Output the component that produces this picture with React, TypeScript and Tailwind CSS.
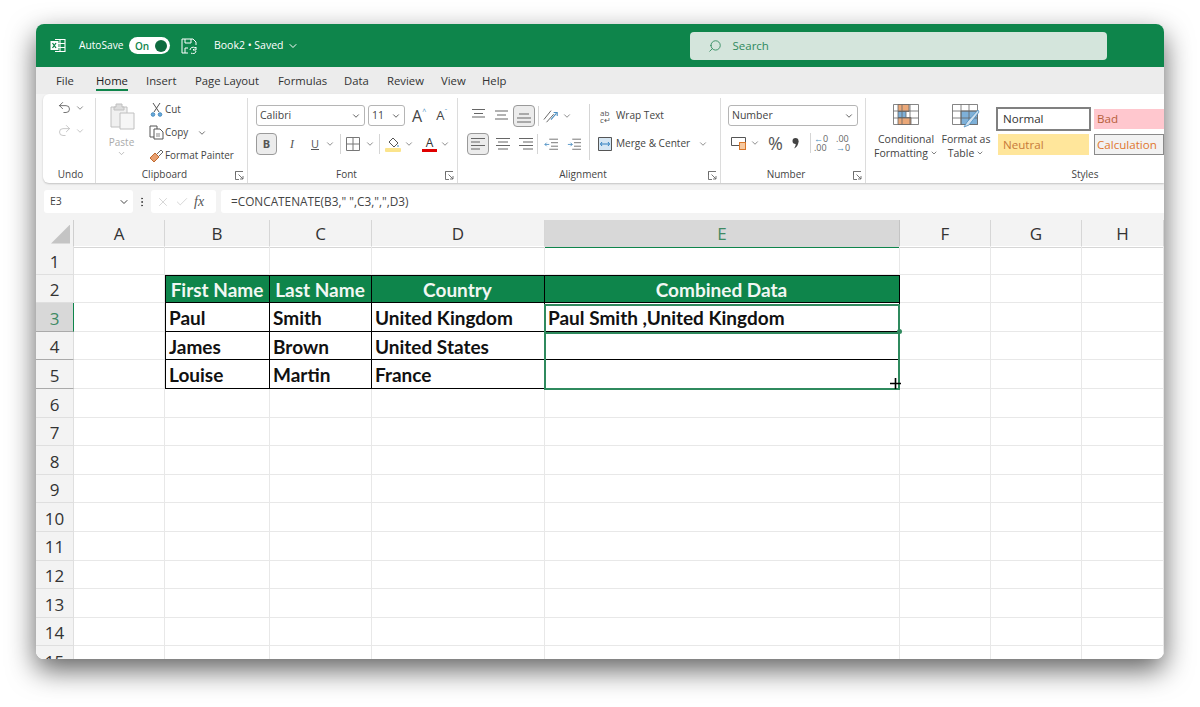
import React from "react";
import { ChevronDown, Search, Undo2, Redo2, MoreVertical, X, Check } from "lucide-react";

const UI = "font-['Open_Sans',sans-serif]";
const colWidths = "grid-cols-[38px_91px_105px_102px_173px_355px_91px_91px_82px]";

const Chev = ({ className = "" }: { className?: string }) => (
  <ChevronDown size={10} strokeWidth={1.6} className={"shrink-0 text-[#555] " + className} />
);

const Launcher = () => (
  <svg width="9" height="9" viewBox="0 0 9 9" className="absolute bottom-[3px] right-[3px]" fill="none" stroke="#666">
    <path d="M.5 4V.5H8M.5.5V8.5H4M3.5 3.5 8 8M8 5v3H5" strokeWidth="0.9" />
  </svg>
);

const Lines = ({ rows }: { rows: [number, number, number][] }) => (
  <svg width="16" height="14" viewBox="0 0 16 14" stroke="#666" strokeWidth="1.1">
    {rows.map(([y, a, b], i) => (
      <path key={i} d={`M${a} ${y}H${b}`} />
    ))}
  </svg>
);

const ExcelLogo = () => (
  <svg width="16" height="15" viewBox="0 0 16 15" fill="none" stroke="white" strokeWidth="1.1">
    <path d="M5 1.500h10v12H5M10 1.500v12M5 5.500h10M5 9.500h10" />
    <rect x="0.500" y="3" width="8" height="9" fill="white" stroke="none" />
    <path d="M2.500 5l3.500 5M6 5l-3.500 5" stroke="#0e854b" strokeWidth="1.3" />
  </svg>
);

function TitleBar() {
  return (
    <div className="flex h-[43px] items-center bg-[#0e854b] text-white">
      <div className="ml-[14px]">
        <ExcelLogo />
      </div>
      <span className="ml-[13px] w-[50px] text-[10.2px]">AutoSave</span>
      <div className="flex h-[17px] w-[41px] items-center justify-between rounded-full bg-white pl-[6px] pr-[3px]">
        <span className="text-[10px] font-semibold leading-none text-[#0e854b]">On</span>
        <span className="h-[12px] w-[12px] rounded-full bg-[#0e6b3f]" />
      </div>
      <svg width="16" height="16" viewBox="0 0 16 16" fill="none" stroke="white" strokeWidth="1" className="ml-[11px]">
        <path d="M1 1h11l3 3v3M1 1v14h6M4 1v4h6V1M4 15v-5h3" />
        <path d="M9 12a3 3 0 0 1 5-2l1-1v3h-3l1-1M15 13a3 3 0 0 1-5 2" />
      </svg>
      <span className="ml-[17px] text-[10.5px]">Book2 • Saved</span>
      <ChevronDown size={12} strokeWidth={2} className="ml-[3px]" />
      <div className="ml-[391px] flex h-[28px] w-[417px] items-center rounded-[4px] bg-[#d4e5dc] pl-[18px] text-[#2f8a5e]">
        <Search size={14} strokeWidth={1.5} className="-scale-x-100" />
        <span className="ml-[11px] text-[11.5px]">Search</span>
      </div>
    </div>
  );
}

function Tabs() {
  const tabs: [string, string][] = [
    ["File", "w-[40px]"],
    ["Home", "w-[50px]"],
    ["Insert", "w-[49px]"],
    ["Page Layout", "w-[83px]"],
    ["Formulas", "w-[66px]"],
    ["Data", "w-[43px]"],
    ["Review", "w-[54px]"],
    ["View", "w-[41px]"],
    ["Help", "w-[40px]"],
  ];
  return (
    <div className="flex h-[27px] items-center bg-[#ececec] pl-[20px] pt-[2px] text-[11.3px] text-[#333]">
      {tabs.map(([t, w]) => (
        <div key={t} className={"shrink-0 whitespace-nowrap " + w}>
          <span className={t === "Home" ? "relative font-medium text-[#1c1c1c]" : ""}>
            {t}
            {t === "Home" && <span className="absolute -bottom-[3px] left-0 h-[2px] w-full bg-[#0e854b]" />}
          </span>
        </div>
      ))}
    </div>
  );
}

const Group = ({ label, w, labelPad, launcher, children }: { label: string; w: string; labelPad: string; launcher?: boolean; children: React.ReactNode }) => (
  <div className={"relative flex shrink-0 flex-col border-r border-[#dcdcdc] " + w}>
    <div className="h-[70px]">{children}</div>
    <div className={"text-center text-[10px] leading-[12px] text-[#444] " + labelPad}>{label}</div>
    {launcher && <Launcher />}
  </div>
);

function UndoGroup() {
  return (
    <Group label="Undo" w="w-[53px]" labelPad="pl-[3px]">
      <div className="flex items-center gap-[3px] pl-[14px] pt-[2px] text-[#555]">
        <Undo2 size={15} strokeWidth={1.3} />
        <Chev />
      </div>
      <div className="flex items-center gap-[3px] pl-[14px] pt-[8px] text-[#bbb]">
        <Redo2 size={15} strokeWidth={1.3} />
        <ChevronDown size={10} className="text-[#bbb]" />
      </div>
    </Group>
  );
}

function ClipboardGroup() {
  return (
    <Group label="Clipboard" w="w-[152px]" labelPad="pr-[14px]" launcher>
      <div className="flex pt-[5px]">
        <div className="flex w-[51px] flex-col items-center text-[10px] text-[#aaa]">
          <svg width="26" height="28" viewBox="0 0 26 28" fill="#f0f0f0" stroke="#c0c0c0" strokeWidth="1">
            <path d="M2 4h16v20H2z" />
            <path d="M7 4V1h6v3h2v3H5V4z" fill="#ddd" />
            <path d="M11 10h14v16H11z" fill="#f6f6f6" />
          </svg>
          <span className="mt-[5px] leading-[12px]">Paste</span>
          <ChevronDown size={9} className="mt-[1px]" />
        </div>
        <div className="-mt-[3px] flex flex-col gap-[4px] text-[9.9px] leading-[19px] text-[#444]">
          <div className="flex h-[19px] items-center">
            <span className="flex w-[18px] justify-center">
              <svg width="13" height="15" viewBox="0 0 13 15" fill="none" stroke="#555" strokeWidth="1">
                <path d="M3 1l6 9M10 1L4 10" />
                <circle cx="3" cy="12.500" r="1.800" fill="#6aa9d8" stroke="#4b8fc2" />
                <circle cx="10" cy="12.500" r="1.800" fill="#6aa9d8" stroke="#4b8fc2" />
              </svg>
            </span>
            Cut
          </div>
          <div className="flex h-[19px] items-center">
            <span className="flex w-[18px] justify-center">
              <svg width="15" height="15" viewBox="0 0 15 15" fill="#fff" stroke="#555" strokeWidth="1">
                <path d="M1 1h7v11H1z" />
                <path d="M5 4h6l3 3v7H5z" />
                <path d="M7 9h4M7 11h4" strokeWidth="0.7" />
              </svg>
            </span>
            Copy
            <ChevronDown size={10} className="ml-[9px] text-[#555]" />
          </div>
          <div className="flex h-[19px] items-center">
            <span className="flex w-[18px] justify-center">
              <svg width="15" height="14" viewBox="0 0 15 14" fill="none">
                <path d="M1 9l5-5 4 4-5 5z" fill="#e8a070" stroke="#c06a30" />
                <path d="M8 5l4-4 2 2-4 4" fill="#fff" stroke="#666" />
              </svg>
            </span>
            Format Painter
          </div>
        </div>
      </div>
    </Group>
  );
}

const Field = ({ w, text }: { w: string; text: string }) => (
  <div className={"flex h-[21px] items-center justify-between rounded-[3px] border border-[#b5b5b5] pl-[3px] pr-[3px] text-[10.5px] text-[#444] " + w}>
    {text}
    <ChevronDown size={10} className="text-[#444]" />
  </div>
);

function FontGroup() {
  return (
    <Group label="Font" w="w-[210px]" labelPad="pr-[12px]" launcher>
      <div className="flex items-center gap-[3px] pl-[8px] pt-[7px]">
        <Field w="w-[109px]" text="Calibri" />
        <Field w="w-[37px]" text="11" />
        <span className="ml-[4px] text-[16px] leading-none text-[#444]">A</span>
        <span className="-ml-[3px] -mt-[6px] text-[7px] text-[#4b8fc2]">^</span>
        <span className="ml-[7px] text-[13px] leading-none text-[#444]">A</span>
        <span className="-ml-[3px] -mt-[6px] text-[7px] text-[#4b8fc2]">ˇ</span>
      </div>
      <div className="flex items-center pl-[8px] pt-[7px] text-[#555]">
        <span className="flex h-[22px] w-[21px] items-center justify-center rounded-[4px] border border-[#9a9a9a] bg-[#ececec] text-[11px] font-bold">B</span>
        <span className="ml-[13px] font-['Liberation_Serif',serif] text-[12px] italic">I</span>
        <span className="ml-[17px] text-[11px] underline">U</span>
        <Chev className="ml-[6px]" />
        <span className="ml-[5px] h-[20px] w-px bg-[#d5d5d5]" />
        <svg width="14" height="14" viewBox="0 0 14 14" fill="none" stroke="#777" className="ml-[5px]">
          <path d="M.5.5h13v13H.5zM7 .5v13M.5 7h13" />
        </svg>
        <Chev className="ml-[5px]" />
        <span className="ml-[4px] h-[20px] w-px bg-[#d5d5d5]" />
        <div className="ml-[5px] flex flex-col items-center">
          <svg width="15" height="11" viewBox="0 0 15 11" fill="none" stroke="#555">
            <path d="M7 1l5 5-4 4-5-5z" />
            <path d="M12 8v2" stroke="#4b8fc2" />
          </svg>
          <span className="h-[4px] w-[16px] rounded-[1px] bg-[#fbe48c]" />
        </div>
        <Chev className="ml-[3px]" />
        <div className="ml-[8px] flex flex-col items-center">
          <span className="text-[12px] leading-[12px] text-[#333]">A</span>
          <span className="h-[3px] w-[15px] bg-[#e00000]" />
        </div>
        <Chev className="ml-[3px]" />
      </div>
    </Group>
  );
}

function AlignmentGroup() {
  return (
    <Group label="Alignment" w="w-[263px]" labelPad="pr-[12px]" launcher>
      <div className="flex">
        <div className="w-[124px] pl-[9px]">
          <div className="flex h-[29px] items-center pt-[7px]">
            <span className="flex w-[23px] justify-center"><Lines rows={[[0.5, 1, 14], [4.5, 3, 12], [8, 1, 14]]} /></span>
            <span className="flex w-[23px] justify-center"><Lines rows={[[2, 1, 14], [6, 3, 12], [10, 1, 14]]} /></span>
            <span className="flex h-[22px] w-[22px] items-center justify-center rounded-[4px] border border-[#9a9a9a] bg-[#ececec]"><Lines rows={[[5, 3, 13], [9, 1, 15], [13, 1, 15]]} /></span>
            <span className="ml-[3px] h-[20px] w-px bg-[#d5d5d5]" />
            <svg width="16" height="16" viewBox="0 0 18 16" fill="none" stroke="#666" className="ml-[4px]">
              <path d="M1 12L9 2M4 15l8-9" strokeWidth="1.1" />
              <path d="M9 12l6-7M12 4h4v4" stroke="#4b8fc2" strokeWidth="1.2" />
            </svg>
            <Chev className="ml-[3px]" />
          </div>
          <div className="mt-[6px] flex h-[22px] items-center">
            <span className="flex h-[22px] w-[22px] items-center justify-center rounded-[4px] border border-[#9a9a9a] bg-[#ececec]"><Lines rows={[[1.5, 1, 15], [5, 1, 10], [8.5, 1, 15], [12, 1, 10]]} /></span>
            <span className="ml-[2px] flex w-[24px] justify-center"><Lines rows={[[1.5, 1, 15], [5, 3, 13], [8.5, 1, 15], [12, 3, 13]]} /></span>
            <span className="flex w-[22px] justify-center"><Lines rows={[[1.5, 1, 15], [5, 5, 15], [8.5, 1, 15], [12, 5, 15]]} /></span>
            <span className="h-[20px] w-px bg-[#d5d5d5]" />
            <svg width="14" height="14" viewBox="0 0 16 14" fill="none" stroke="#666" className="ml-[6px]">
              <path d="M6 1.500h10M8 5.500h8M8 9.500h8M6 13h10" />
              <path d="M6 7.500H1M3 5.500l-2 2 2 2" stroke="#4b8fc2" />
            </svg>
            <svg width="14" height="14" viewBox="0 0 16 14" fill="none" stroke="#666" className="ml-[9px]">
              <path d="M6 1.500h10M8 5.500h8M8 9.500h8M6 13h10" />
              <path d="M1 7.500h5M4 5.500l2 2-2 2" stroke="#4b8fc2" />
            </svg>
          </div>
        </div>
        <div className="ml-[7px] mt-[6px] h-[56px] w-px bg-[#d5d5d5]" />
        <div className="pl-[8px] text-[10.1px] text-[#444]">
          <div className="flex h-[29px] items-center pl-[2px] pt-[7px]">
            <span className="w-[16px] text-[8px] leading-[7px] text-[#555]">ab<br />c↵</span>
            Wrap Text
          </div>
          <div className="mt-[6px] flex h-[22px] items-center">
            <svg width="14" height="14" viewBox="0 0 14 14" fill="#d5e6f3" stroke="#555" className="mr-[4px]">
              <path d="M.5.5h13v13H.5z" />
              <path d="M2.500 7h9M4 5L2.500 7 4 9M10 5l1.500 2L10 9" fill="none" stroke="#2f7fbf" />
            </svg>
            Merge &amp; Center
            <Chev className="ml-[8px]" />
          </div>
        </div>
      </div>
    </Group>
  );
}

function NumberGroup() {
  return (
    <Group label="Number" w="w-[145px]" labelPad="pr-[14px]" launcher>
      <div className="pl-[7px] pt-[7px]">
        <Field w="w-[130px]" text="Number" />
      </div>
      <div className="flex items-center pl-[10px] pt-[7px] text-[#555]">
        <svg width="16" height="14" viewBox="0 0 16 14" fill="none" stroke="#555">
          <path d="M.5 1.500h14v8H.5z" />
          <rect x="8.500" y="6.500" width="6" height="7" fill="#f6c9a0" stroke="#d9772a" />
        </svg>
        <Chev className="ml-[3px]" />
        <span className="ml-[8px] text-[18px] leading-none">%</span>
        <svg width="7" height="11" viewBox="0 0 7 11" fill="#444" className="ml-[9px]">
          <circle cx="3.500" cy="3" r="3" />
          <path d="M6.500 3c0 4-2 6.500-4.500 7.500 1.500-2 2-4 1.500-5.500z" />
        </svg>
        <span className="ml-[11px] h-[20px] w-px bg-[#d5d5d5]" />
        <span className="ml-[3px] text-[9px] leading-[9px] text-[#666]"><span className="text-[#4b8fc2]">←</span>0<br />.00</span>
        <span className="ml-[8px] text-[9px] leading-[9px] text-[#666]">.00<br /><span className="text-[#4b8fc2]">→</span>0</span>
      </div>
    </Group>
  );
}

const StyleChip = ({ text, className }: { text: string; className: string }) => (
  <div className={"flex items-center text-[11.6px] " + className}>{text}</div>
);

function StylesGroup() {
  return (
    <div className="relative flex min-w-0 flex-1 flex-col">
      <div className="flex h-[70px]">
        <div className="ml-[5px] flex w-[70px] shrink-0 flex-col items-center whitespace-nowrap pt-[6px] text-center text-[10.5px] leading-[14px] text-[#444]">
          <svg width="26" height="21" viewBox="0 0 26 21" fill="#fff" stroke="#666" strokeWidth="0.8" className="mb-[7px]">
            <path d="M.5.5h25v20H.5z" />
            <path d="M5 .5h11v7H5zM5 13.500h13v7H5z" fill="#eba878" />
            <path d="M5 7.500h8v6H5z" fill="#7eb0d8" />
            <path d="M9 .5v20M17 .5v20M.5 7h25M.5 14h25" />
          </svg>
          Conditional<br />
          <span className="flex items-center">Formatting<ChevronDown size={8} className="ml-[2px]" /></span>
        </div>
        <div className="flex w-[50px] shrink-0 flex-col items-center whitespace-nowrap pt-[6px] text-center text-[10.5px] leading-[14px] text-[#444]">
          <svg width="28" height="24" viewBox="0 0 28 24" fill="#fff" stroke="#666" strokeWidth="0.8" className="mb-[4px]">
            <path d="M.5.5h25v20H.5z" />
            <path d="M9 7h16.500v13.500H9z" fill="#7eb0d8" />
            <path d="M9 .5v20M17 .5v20M.5 7h25M.5 14h25" />
            <path d="M26 6L15 18l-3 5 5-2L27 8z" fill="#cfe0ee" stroke="#4b8fc2" />
          </svg>
          Format as<br />
          <span className="flex items-center">Table<ChevronDown size={8} className="ml-[2px]" /></span>
        </div>
        <div className="ml-[5px] mt-[9px] grid h-[48px] flex-1 grid-cols-[95px_1fr] grid-rows-[24px_24px] gap-x-[3px] overflow-hidden">
          <StyleChip text="Normal" className="border-2 border-[#808080] pl-[5px] text-[#333]" />
          <StyleChip text="Bad" className="my-[2px] bg-[#ffc7ce] pl-[3px] text-[#b5603a]" />
          <StyleChip text="Neutral" className="mx-[2px] mt-[3px] bg-[#ffe69b] pl-[5px] font-medium text-[#c77a3a]" />
          <StyleChip text="Calculation" className="mt-[3px] border border-[#8a8a8a] bg-[#f2f2f2] pl-[2px] text-[#e0772f]" />
        </div>
      </div>
      <div className="pl-[140px] text-center text-[10px] leading-[12px] text-[#444]">Styles</div>
    </div>
  );
}

function Ribbon() {
  return (
    <div className="ml-[7px] flex h-[89px] rounded-l-[6px] bg-white pt-[4px] shadow-[0_1px_2px_rgba(0,0,0,0.2)]">
      <UndoGroup />
      <ClipboardGroup />
      <FontGroup />
      <AlignmentGroup />
      <NumberGroup />
      <StylesGroup />
    </div>
  );
}

function FormulaBar() {
  return (
    <div className="mt-[7px] flex h-[23px] items-stretch pl-[8px] text-[#444]">
      <div className="flex w-[89px] items-center justify-between rounded-[3px] bg-white pl-[6px] pr-[3px] text-[10.5px]">
        E3
        <ChevronDown size={12} strokeWidth={2} />
      </div>
      <MoreVertical size={12} strokeWidth={2} className="mx-[3px] self-center" />
      <div className="flex w-[65px] items-center gap-[5px] rounded-[3px] bg-white pl-[5px] text-[#c6c6c6]">
        <X size={14} strokeWidth={1.2} />
        <Check size={14} strokeWidth={1.2} />
        <span className="font-['Liberation_Serif',serif] text-[14px] italic text-[#555]">fx</span>
      </div>
      <div className="ml-[5px] flex flex-1 items-center rounded-l-[3px] bg-white pl-[10px] text-[11.8px]">
        =CONCATENATE(B3," ",C3,",",D3)
      </div>
    </div>
  );
}

const headers = ["A", "B", "C", "D", "E", "F", "G", "H"];

const table: Record<number, string[]> = {
  2: ["First Name", "Last Name", "Country", "Combined Data"],
  3: ["Paul", "Smith", "United Kingdom", "Paul Smith ,United Kingdom"],
  4: ["James", "Brown", "United States", ""],
  5: ["Louise", "Martin", "France", ""],
};

const Row = ({ n }: { n: number }) => {
  const data = table[n];
  return (
    <>
      <div
        className={
          "flex items-center justify-center border-b border-r pt-[3px] font-['Open_Sans',sans-serif] text-[17px] " +
          (n === 3
            ? "border-b-[#aaaaaa] border-r-[#0e854b] bg-[#d8d8d8] text-[#3f8a64]"
            : n === 4 || n === 5
              ? "border-b-[#aaaaaa] border-r-[#dcdcdc] bg-[#f3f3f3] text-[#333]"
              : "border-[#dfdfdf] bg-[#f3f3f3] text-[#333]")
        }
      >
        {n}
      </div>
      <div className="border-b border-r border-[#e8e8e8]" />
      {[0, 1, 2, 3].map((i) => {
        if (!data) return <div key={i} className="border-b border-r border-[#e8e8e8]" />;
        const cls =
          n === 2
            ? "justify-center border-t border-black bg-[#0e854b] pr-[1px] font-bold text-[#f1f7f3]"
            : "pl-[3px] font-bold text-[#111]";
        return (
          <div
            key={i}
            className={
              "flex items-center overflow-hidden whitespace-nowrap border-b border-r border-black pt-[3px] text-[19px] " +
              (i === 0 ? "border-l " : "") +
              cls
            }
          >
            {data[i]}
          </div>
        );
      })}
      {[0, 1, 2].map((i) => (
        <div key={i} className="border-b border-r border-[#e8e8e8]" />
      ))}
    </>
  );
};

function Sheet() {
  const rows = Array.from({ length: 15 }, (_, i) => i + 1);
  return (
    <div className="relative mt-[7px] flex-1 overflow-hidden bg-white font-['Lato',sans-serif]">
      <div className={"grid h-[26px] bg-[#f3f3f3] " + colWidths}>
        <div className="flex items-end justify-end border-b border-r border-[#cfcfcf] p-[3px]">
          <div className="h-[19px] w-[19px] bg-[#c4c4c4] [clip-path:polygon(100%_0,100%_100%,0_100%)]" />
        </div>
        {headers.map((h) => (
          <div
            key={h}
            className={
              "flex items-center justify-center border-b border-r pt-[1px] font-['Open_Sans',sans-serif] text-[17px] font-normal " +
              (h === "E" ? "border-b-[#0e854b] border-r-[#c4c4c4] bg-[#d8d8d8] text-[#3f8a64]" : "border-[#d6d6d6] text-[#333]")
            }
          >
            {h}
          </div>
        ))}
      </div>
      <div className={"relative grid auto-rows-[28.6px] " + colWidths}>
        {rows.map((n) => (
          <Row key={n} n={n} />
        ))}
        <div className="absolute left-[508px] top-[57.500px] h-[86px] w-[356px] border-2 border-[#2f8a5e]">
          <div className="absolute inset-x-0 top-[26px] h-[2px] bg-[#2f8a5e]" />
        </div>
        <div className="absolute left-[861px] top-[83px] h-[5px] w-[5px] rounded-full bg-[#2f8a5e]" />
        <svg width="11" height="11" viewBox="0 0 11 11" stroke="#000" strokeWidth="1.6" className="absolute left-[854px] top-[132px]">
          <path d="M5.500 0v11M0 5.500h11" />
        </svg>
      </div>
    </div>
  );
}

export default function App() {
  return (
    <div className={"h-[707px] w-[1200px] overflow-hidden bg-white pl-[36px] pt-[24px] " + UI}>
      <div className="flex h-[635px] w-[1128px] flex-col overflow-hidden rounded-[8px] bg-[#f3f3f3] shadow-[0_11px_28px_rgba(0,0,0,0.62)]">
        <TitleBar />
        <Tabs />
        <Ribbon />
        <FormulaBar />
        <Sheet />
      </div>
    </div>
  );
}
